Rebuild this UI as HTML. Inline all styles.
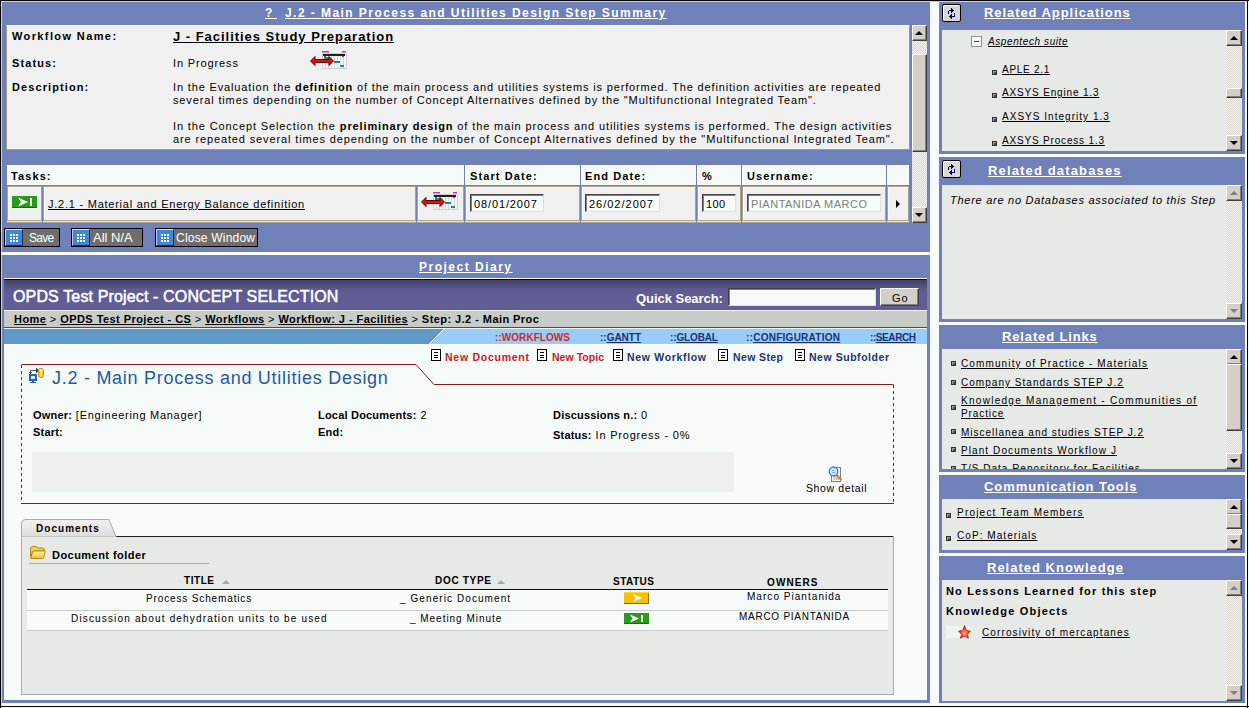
<!DOCTYPE html>
<html><head><meta charset="utf-8">
<style>
*{box-sizing:border-box;margin:0;padding:0}
html,body{width:1249px;height:708px;overflow:hidden;background:#f6faf8}
body{position:relative;font-family:"Liberation Sans",sans-serif;font-size:11px;color:#000}
.a{position:absolute}
.blue{background:#7080b9}
.t{position:absolute;white-space:nowrap;line-height:1}
.u{text-decoration:underline}
.b{font-weight:bold}
.w{color:#fff}
.sb{position:absolute;background:#ebe9e4 repeating-conic-gradient(#f4f3ef 0 25%,#d9d6cf 0 50%) 0 0/2px 2px}
.sbb{position:absolute;width:16px;height:16px;background:#d4d0c8;border:1px solid;border-color:#fff #404040 #404040 #fff;box-shadow:inset -1px -1px #808080}
.thumb{position:absolute;background:#d4d0c8;border:1px solid;border-color:#fff #404040 #404040 #fff;box-shadow:inset -1px -1px #808080}
.up:after,.dn:after{content:"";position:absolute;left:3px;border-left:4px solid transparent;border-right:4px solid transparent}
.up:after{top:5px;border-bottom:4px solid #000}
.dn:after{top:5px;border-top:4px solid #000}
.l15:after{left:2px}
.dis:after{border-bottom-color:#808080;border-top-color:#808080}
.cell{background:#f0f0f0;border:1px solid #a8a490;box-shadow:inset 1px 1px #fafaf8,0 1px #e8e8e0,0 2px #a8a490}
.inp{background:#f6faf8;border:1px solid;border-color:#404040 #e0e0d8 #e0e0d8 #404040;box-shadow:inset 1px 1px #808080;font-size:11px}
.inp span{position:absolute;left:3px;top:4px;line-height:1;letter-spacing:0.5px}
.btn{background:#6e6e6e;border:1px solid #000}
.btn i{position:absolute;left:0;top:0;width:18px;height:17px;background:#3d88d8;border:1px solid;border-color:#d8d0f8 #0a3a40 #0a3a40 #c8c0f0}
.btn i:after{content:"";position:absolute;left:4px;top:4px;width:9px;height:9px;background:radial-gradient(circle at 1px 1px,#fff 0.9px,transparent 1.1px) 0 0/3px 3px}
.doc{width:10px;height:12px;border:1px solid #000;background:#fff}
.doc:after{content:"";position:absolute;left:2px;top:2px;width:4px;height:6px;background:linear-gradient(#000 0 1px,transparent 1px 3px,#000 3px 4px,transparent 4px 5px,#000 5px 6px)}
.pc{background:#e6e9e6}
.bul{position:absolute;width:5px;height:5px;background:#505050;border:1px solid #303030;box-shadow:inset 1px 1px #a0a0a0}
.rf{position:absolute;width:19px;height:18px;background:#d8d8d0;border:1px solid #000;border-radius:2px;box-shadow:inset 1px 1px #fff}
.btn span{position:absolute;color:#fff;font-size:12px;line-height:1;white-space:nowrap}
</style></head><body>
<!-- outer frame lines -->
<div class="a" style="left:0;top:0;width:1249px;height:1px;background:#000"></div>
<div class="a" style="left:0;top:0;width:1px;height:708px;background:#000"></div>
<div class="a" style="left:1247px;top:0;width:1px;height:708px;background:#000"></div>
<div class="a" style="left:0;top:706px;width:1249px;height:1px;background:#000"></div>

<!-- ============ LEFT TOP PANEL ============ -->
<div class="a blue" style="left:2px;top:2px;width:928px;height:250px"></div>
<div class="a" style="left:1px;top:1px;width:1246px;height:1px;background:#c8d0e8"></div>
<div class="a" style="left:1px;top:1px;width:1px;height:705px;background:#c8d0e8"></div>
<div class="t w b u" style="left:265px;top:7px;font-size:12px;letter-spacing:1.47px;width:12px;overflow:hidden">?&nbsp;&nbsp;</div>
<div class="t w b u" id="ttl" style="left:285px;top:7px;font-size:12px;letter-spacing:1.44px">J.2 - Main Process and Utilities Design Step Summary</div>
<!-- summary grey box -->
<div class="a" style="left:6px;top:25px;width:904px;height:125px;background:#f0f0f0;border-left:1px solid #a09a80;border-right:1px solid #a09a80;border-top:1px solid #fafafa;border-bottom:1px solid #a09a80"></div>
<div class="t b" id="l1" style="left:12px;top:31px;letter-spacing:1.39px">Workflow Name:</div>
<div class="t b u" id="wfn" style="left:173px;top:30px;font-size:13px;letter-spacing:0.97px">J - Facilities Study Preparation</div>
<div class="t b" style="left:12px;top:58px;letter-spacing:1.1px">Status:</div>
<div class="t" id="inp" style="left:173px;top:58px;letter-spacing:0.87px">In Progress</div>
<div class="t b" style="left:12px;top:82px;letter-spacing:1.1px">Description:</div>
<div class="t" id="d1" style="left:173px;top:82px;letter-spacing:0.85px">In the Evaluation the <b>definition</b> of the main process and utilities systems is performed. The definition activities are repeated</div>
<div class="t" id="d2" style="left:173px;top:95px;letter-spacing:0.86px">several times depending on the number of Concept Alternatives defined by the "Multifunctional Integrated Team".</div>
<div class="t" id="d3" style="left:173px;top:121px;letter-spacing:0.88px">In the Concept Selection the <b>preliminary design</b> of the main process and utilities systems is performed. The design activities</div>
<div class="t" id="d4" style="left:173px;top:134px;letter-spacing:0.87px">are repeated several times depending on the number of Concept Alternatives defined by the "Multifunctional Integrated Team".</div>
<!-- gantt icon -->
<svg class="a" style="left:310px;top:50px" width="37" height="19" viewBox="0 0 37 19">
<rect x="12.5" y="3.5" width="24" height="15" fill="#f6f6f6" stroke="#d0d0d0" stroke-width="1"/>
<path d="M15.5 5v13M18.5 5v13M21.5 5v13M24.5 5v13M27.5 5v13M30.5 5v13M33.5 5v13" stroke="#d8d8d8" stroke-width="1"/>
<rect x="12" y="1" width="7" height="1.5" fill="#b040c0"/><rect x="32" y="1" width="4" height="1.5" fill="#b040c0"/>
<path d="M13 4h22v2h-1l-1 1.5-1-1.5H16l-1 1.5-1-1.5h-1z" fill="#202020"/>
<rect x="14" y="7" width="5" height="2" fill="#109090"/><rect x="24" y="11" width="6" height="2" fill="#109090"/><rect x="30" y="15" width="4" height="2" fill="#109090"/>
<path d="M0.5 11 L5 6.5 L5 9.5 L19 9.5 L19 6.5 L23.5 11 L19 15.5 L19 12.5 L5 12.5 L5 15.5 Z" fill="#ff0000" stroke="#400000" stroke-width="0.9"/>
</svg>
<!-- scrollbar -->
<div class="sb" style="left:912px;top:25px;width:15px;height:197px"></div>
<div class="sbb up l15" style="left:912px;top:25px;width:15px;height:16px"></div>
<div class="thumb" style="left:912px;top:54px;width:15px;height:98px"></div>
<div class="sbb dn l15" style="left:912px;top:207px;width:15px;height:16px"></div>
<!-- tasks table -->
<div class="a" style="left:7px;top:165px;width:902px;height:20px;background:#f6faf8"></div>
<div class="a" style="left:464px;top:165px;width:1px;height:20px;background:#7080b9"></div>
<div class="a" style="left:580px;top:165px;width:1px;height:20px;background:#7080b9"></div>
<div class="a" style="left:696px;top:165px;width:1px;height:20px;background:#7080b9"></div>
<div class="a" style="left:741px;top:165px;width:1px;height:20px;background:#7080b9"></div>
<div class="a" style="left:886px;top:165px;width:1px;height:20px;background:#7080b9"></div>
<div class="t b" style="left:11px;top:171px;letter-spacing:1.1px">Tasks:</div>
<div class="t b" style="left:470px;top:171px;letter-spacing:1.1px">Start Date:</div>
<div class="t b" style="left:585px;top:171px;letter-spacing:1.1px">End Date:</div>
<div class="t b" style="left:702px;top:171px;letter-spacing:1.1px">%</div>
<div class="t b" style="left:747px;top:171px;letter-spacing:1.1px">Username:</div>
<div class="a cell" style="left:7px;top:186px;width:35px;height:35px"></div>
<div class="a cell" style="left:43px;top:186px;width:373px;height:35px"></div>
<div class="a cell" style="left:417px;top:186px;width:47px;height:35px"></div>
<div class="a cell" style="left:465px;top:186px;width:115px;height:35px"></div>
<div class="a cell" style="left:581px;top:186px;width:115px;height:35px"></div>
<div class="a cell" style="left:697px;top:186px;width:44px;height:35px"></div>
<div class="a cell" style="left:742px;top:186px;width:144px;height:35px"></div>
<div class="a cell" style="left:887px;top:186px;width:22px;height:35px"></div>
<svg class="a" style="left:12px;top:196px" width="25" height="12" viewBox="0 0 25 12"><rect width="25" height="12" fill="#2a9a1a"/><rect x="0" y="11" width="25" height="1" fill="#1a6a10"/><path d="M6 1.5 L16 6 L6 10.5 L9 6 Z" fill="#fff"/><rect x="18" y="2" width="2" height="8" fill="#fff"/></svg>
<div class="t u" id="task" style="left:48px;top:199px;letter-spacing:0.76px">J.2.1 - Material and Energy Balance definition</div>
<svg class="a" style="left:421px;top:191px" width="37" height="19" viewBox="0 0 37 19">
<rect x="12.5" y="3.5" width="24" height="15" fill="#f6f6f6" stroke="#d0d0d0" stroke-width="1"/>
<path d="M15.5 5v13M18.5 5v13M21.5 5v13M24.5 5v13M27.5 5v13M30.5 5v13M33.5 5v13" stroke="#d8d8d8" stroke-width="1"/>
<rect x="12" y="1" width="7" height="1.5" fill="#b040c0"/><rect x="32" y="1" width="4" height="1.5" fill="#b040c0"/>
<path d="M13 4h22v2h-1l-1 1.5-1-1.5H16l-1 1.5-1-1.5h-1z" fill="#202020"/>
<rect x="14" y="7" width="5" height="2" fill="#109090"/><rect x="24" y="11" width="6" height="2" fill="#109090"/><rect x="30" y="15" width="4" height="2" fill="#109090"/>
<path d="M0.5 11 L5 6.5 L5 9.5 L19 9.5 L19 6.5 L23.5 11 L19 15.5 L19 12.5 L5 12.5 L5 15.5 Z" fill="#ff0000" stroke="#400000" stroke-width="0.9"/>
</svg>
<div class="a inp" style="left:470px;top:194px;width:74px;height:18px"><span id="i1" style="letter-spacing:0.88px">08/01/2007</span></div>
<div class="a inp" style="left:585px;top:194px;width:75px;height:18px"><span id="i2" style="letter-spacing:0.99px">26/02/2007</span></div>
<div class="a inp" style="left:702px;top:194px;width:34px;height:18px"><span id="i3" style="letter-spacing:0.32px">100</span></div>
<div class="a inp" style="left:747px;top:194px;width:134px;height:18px;color:#808080;white-space:nowrap"><span id="i4" style="letter-spacing:0.49px">PIANTANIDA MARCO</span></div>
<div class="a" style="left:896px;top:200px;border-left:4px solid #000;border-top:4px solid transparent;border-bottom:4px solid transparent"></div>
<!-- buttons -->
<div class="a btn" style="left:4px;top:228px;width:56px;height:19px"><i></i><span id="bsave" style="left:24px;top:3px;letter-spacing:-0.72px">Save</span></div>
<div class="a btn" style="left:71px;top:228px;width:72px;height:19px"><i></i><span id="ball" style="left:21px;top:2px;font-size:13px;font-weight:normal;letter-spacing:-0.02px">All N/A</span></div>
<div class="a btn" style="left:155px;top:228px;width:103px;height:19px"><i></i><span id="bclose" style="left:20px;top:3px;letter-spacing:0.21px">Close Window</span></div>
<div class="a" style="left:2px;top:252px;width:928px;height:3px;background:#fcfdfc"></div>

<!-- ============ LEFT BOTTOM PANEL ============ -->
<div class="a blue" style="left:2px;top:255px;width:928px;height:448px"></div>
<div class="t w b u" id="pd" style="left:419px;top:261px;font-size:12px;letter-spacing:1.5px">Project Diary</div>
<!-- inner frame -->
<div class="a" style="left:4px;top:278px;width:923px;height:422px;background:#f6faf8"></div>
<div class="a" style="left:4px;top:278px;width:923px;height:1px;background:#f4f6fa"></div>
<div class="a" style="left:4px;top:279px;width:923px;height:1px;background:#000"></div>
<div class="a" style="left:4px;top:280px;width:923px;height:30px;background:linear-gradient(#434266,#4c4a74 12%,#5c5990 30%,#605c96 45%,#615d97)"></div>
<div class="t w" id="opds" style="left:13px;top:289px;font-size:16px;-webkit-text-stroke:0.5px #fff;letter-spacing:0.14px">OPDS Test Project - CONCEPT SELECTION</div>
<div class="t w b" id="qs" style="left:636px;top:292px;font-size:13px;letter-spacing:-0.04px">Quick Search:</div>
<div class="a" style="left:728px;top:288px;width:148px;height:18px;background:#f6faf8;border:1px solid;border-color:#404040 #e0e0d8 #e0e0d8 #404040;box-shadow:inset 1px 1px #808080"></div>
<div class="a" style="left:880px;top:288px;width:39px;height:18px;background:#d4d0c8;border:1px solid;border-color:#fff #404040 #404040 #fff;box-shadow:inset -1px -1px #808080"></div>
<div class="t" id="go" style="left:892px;top:293px;font-size:11px;letter-spacing:1px">Go</div>
<!-- breadcrumb -->
<div class="a" style="left:4px;top:310px;width:923px;height:19px;background:#c8ccc8;border-top:1px solid #f0f4f0;border-bottom:1px solid #f0f4f0;box-shadow:inset 0 -1px #3a5068"></div>
<div class="t b" id="bc" style="left:14px;top:314px;letter-spacing:0.44px"><span class="u">Home</span> <span style="font-weight:normal">&gt;</span> <span class="u">OPDS Test Project - CS</span> <span style="font-weight:normal">&gt;</span> <span class="u">Workflows</span> <span style="font-weight:normal">&gt;</span> <span class="u">Workflow: J - Facilities</span> <span style="font-weight:normal">&gt;</span> Step: J.2 - Main Proc</div>
<!-- blue tab bar -->
<div class="a" style="left:4px;top:329px;width:923px;height:15px;background:#99ccf8"></div>
<svg class="a" style="left:4px;top:329px" width="445" height="15"><path d="M0 0H440L425 15H0Z" fill="#6098c8"/><path d="M440 0L425 15" stroke="#fff" stroke-width="1"/></svg>
<div class="t b" id="m1" style="left:495px;top:333px;font-size:10px;color:#d02828;letter-spacing:0.06px">::WORKFLOWS</div>
<div class="t b" id="m2" style="left:600px;top:333px;font-size:10px;color:#1a3470;letter-spacing:-0.02px">::<span class="u">GANTT</span></div>
<div class="t b" id="m3" style="left:670px;top:333px;font-size:10px;color:#1a3470;letter-spacing:-0.13px">::<span class="u">GLOBAL</span></div>
<div class="t b" id="m4" style="left:746px;top:333px;font-size:10px;color:#1a3470;letter-spacing:0.26px">::<span class="u">CONFIGURATION</span></div>
<div class="t b" id="m5" style="left:870px;top:333px;font-size:10px;color:#1a3470;letter-spacing:-0.42px">::<span class="u">SEARCH</span></div>
<!-- action links -->
<div class="a doc" style="left:431px;top:349px"></div>
<div class="t b" id="n1" style="left:445px;top:352px;font-size:10.5px;color:#c82020;letter-spacing:0.74px">New Document</div>
<div class="a doc" style="left:537px;top:349px"></div>
<div class="t b" id="n2" style="left:552px;top:352px;font-size:10.5px;color:#c82020;letter-spacing:0.03px">New Topic</div>
<div class="a doc" style="left:613px;top:349px"></div>
<div class="t b" id="n3" style="left:627px;top:352px;font-size:10.5px;color:#1a3470;letter-spacing:0.68px">New Workflow</div>
<div class="a doc" style="left:718px;top:349px"></div>
<div class="t b" id="n4" style="left:733px;top:352px;font-size:10.5px;color:#1a3470;letter-spacing:0.39px">New Step</div>
<div class="a doc" style="left:795px;top:349px"></div>
<div class="t b" id="n5" style="left:809px;top:352px;font-size:10.5px;color:#1a3470;letter-spacing:0.54px">New Subfolder</div>
<!-- red box -->
<svg class="a" style="left:20px;top:363px" width="876" height="142">
<path d="M1.5 1.5H396L414 21.5H873.5" fill="none" stroke="#8b1a1a" stroke-width="1"/>
<path d="M1.5 2V140.5" fill="none" stroke="#8b1a1a" stroke-width="1" stroke-dasharray="3 3"/>
<path d="M873.5 22V140.5" fill="none" stroke="#8b1a1a" stroke-width="1" stroke-dasharray="3 3"/>
<path d="M1 140.5H874" fill="none" stroke="#8b1a1a" stroke-width="1"/>
</svg>
<svg class="a" style="left:29px;top:368px" width="17" height="16" viewBox="0 0 17 16" shape-rendering="crispEdges">
<defs><linearGradient id="cy" x1="0" y1="0" x2="1" y2="0"><stop offset="0" stop-color="#e8a010"/><stop offset="0.5" stop-color="#fff070"/><stop offset="1" stop-color="#e8a010"/></linearGradient></defs>
<rect x="0" y="6" width="8" height="7" fill="#2a62b0"/><rect x="2" y="8" width="4" height="3" fill="#d8e8f8"/><rect x="3" y="13" width="2" height="1" fill="#2a62b0"/><rect x="1" y="14" width="6" height="1" fill="#2a62b0"/>
<path d="M1 2h6v1H2v3H1z" fill="#506080"/><path d="M7 0h1v1h1v1h1v1H9v1H8v1H7z" fill="#404860"/><path d="M0 4h3v1H2v1H1V5H0z" fill="#404860"/>
<g shape-rendering="geometricPrecision"><rect x="9.5" y="0.5" width="5" height="9" rx="2.5" ry="1.8" fill="url(#cy)" stroke="#d89000" stroke-width="1"/><ellipse cx="12" cy="2.3" rx="2" ry="1" fill="#fff8a0"/></g>
</svg>
<div class="t" id="j2" style="left:52px;top:369px;font-size:18px;color:#1f5a9e;letter-spacing:0.73px">J.2 - Main Process and Utilities Design</div>
<div class="t" id="ow" style="left:33px;top:410px;letter-spacing:0.72px"><b style="letter-spacing:0.2px">Owner:</b> [Engineering Manager]</div>
<div class="t b" id="st" style="left:33px;top:427px;letter-spacing:0.2px">Start:</div>
<div class="t" id="ld" style="left:318px;top:410px;letter-spacing:0.85px"><b style="letter-spacing:0.2px">Local Documents:</b> 2</div>
<div class="t b" id="en" style="left:318px;top:427px;letter-spacing:0.2px">End:</div>
<div class="t" id="dn" style="left:553px;top:410px;letter-spacing:0.71px"><b style="letter-spacing:0.2px">Discussions n.:</b> 0</div>
<div class="t" id="sts" style="left:553px;top:430px;letter-spacing:0.8px"><b style="letter-spacing:0.2px">Status:</b> In Progress - 0%</div>
<div class="a" style="left:32px;top:452px;width:702px;height:40px;background:#efefef"></div>
<svg class="a" style="left:827px;top:466px" width="17" height="16" viewBox="0 0 17 16">
<rect x="4.5" y="1.5" width="9" height="14" fill="#fafafa" stroke="#808080"/><path d="M6 11h6M6 13h6" stroke="#a0a0a0"/>
<circle cx="6.5" cy="5.5" r="4.3" fill="#d0e8fa" stroke="#2a78c8" stroke-width="1.3"/><path d="M4.5 4.5h3M5 6.5h3" stroke="#60a0d8" stroke-width="0.8"/>
<path d="M9.5 9l5 5" stroke="#e07818" stroke-width="2"/>
</svg>
<div class="t" id="sd" style="left:806px;top:483px;font-size:10.5px;letter-spacing:0.62px">Show detail</div>
<!-- documents tab -->
<div class="a" style="left:21px;top:536px;width:873px;height:159px;background:#e6e9e6;border:1px solid #a8aca8;border-top:none"></div>
<div class="a" style="left:115px;top:536px;width:778px;height:1px;background:#202020"></div>
<svg class="a" style="left:21px;top:519px" width="96" height="18"><defs><linearGradient id="tg" x1="0" y1="0" x2="0" y2="1"><stop offset="0" stop-color="#f0f0f0"/><stop offset="1" stop-color="#dcdedc"/></linearGradient></defs><path d="M0.5 18V5Q0.5 0.5 5 0.5H88L95 17.5" fill="url(#tg)" stroke="#a8aca8"/><path d="M1 17.5H95" stroke="#c8ccc8"/></svg>
<div class="t b" id="tabd" style="left:36px;top:524px;font-size:10px;letter-spacing:1.04px">Documents</div>
<svg class="a" style="left:30px;top:546px" width="16" height="13" viewBox="0 0 16 13"><defs><linearGradient id="fg" x1="0" y1="0" x2="0" y2="1"><stop offset="0" stop-color="#fff4a0"/><stop offset="1" stop-color="#e8c030"/></linearGradient></defs><path d="M0.5 11V3Q0.5 0.5 3 0.5H6L8 2H12Q14.5 2 14.5 4V5H3Z" fill="#f0d050" stroke="#b08a10"/><path d="M1 12.5Q0.5 12.5 0.8 11.5L2.5 6Q3 5 4 5H14.5Q15.5 5 15.2 6L13.8 11.5Q13.5 12.5 12.5 12.5Z" fill="url(#fg)" stroke="#b08a10"/></svg>
<div class="t b" id="dfold" style="left:52px;top:550px;letter-spacing:0.46px">Document folder</div>
<div class="a" style="left:29px;top:563px;width:180px;height:1px;background:#a8aca8"></div>
<div class="t b" id="h1" style="left:184px;top:576px;font-size:10px;letter-spacing:0.55px">TITLE</div>
<div class="a" style="left:222px;top:580px;border-bottom:4px solid #a8a8a8;border-left:4px solid transparent;border-right:4px solid transparent"></div>
<div class="t b" id="h2" style="left:435px;top:576px;font-size:10px;letter-spacing:0.7px">DOC TYPE</div>
<div class="a" style="left:497px;top:580px;border-bottom:4px solid #a8a8a8;border-left:4px solid transparent;border-right:4px solid transparent"></div>
<div class="t b" id="h3" style="left:613px;top:577px;font-size:10px;letter-spacing:0.5px">STATUS</div>
<div class="t b" id="h4" style="left:767px;top:578px;font-size:10px;letter-spacing:1.1px">OWNERS</div>
<div class="a" style="left:27px;top:589px;width:861px;height:1px;background:#101010"></div>
<div class="a" style="left:27px;top:590px;width:861px;height:21px;background:#f6faf8;border-bottom:1px solid #c8ccc8"></div>
<div class="a" style="left:27px;top:611px;width:861px;height:20px;background:#f6faf8;border-bottom:1px solid #c8ccc8"></div>
<div class="t" id="r1" style="left:146px;top:594px;font-size:10px;letter-spacing:0.86px">Process Schematics</div>
<div class="t" id="r2" style="left:71px;top:614px;font-size:10px;letter-spacing:1.16px">Discussion about dehydration units to be used</div>
<div class="t" id="r3" style="left:400px;top:594px;font-size:10px;letter-spacing:1.08px">_ Generic Document</div>
<div class="t" id="r4" style="left:410px;top:614px;font-size:10px;letter-spacing:0.97px">_ Meeting Minute</div>
<svg class="a" style="left:624px;top:592px" width="25" height="12" viewBox="0 0 25 12"><rect width="25" height="12" fill="#f4c200"/><rect y="0" width="25" height="1" fill="#ffd830"/><rect x="24" y="1" width="1" height="11" fill="#a87000"/><rect y="11" width="25" height="1" fill="#8a6000"/><path d="M9 2L18 6L9 10L11.5 6Z" fill="#fff"/></svg>
<svg class="a" style="left:624px;top:613px" width="25" height="11" viewBox="0 0 25 11"><rect width="25" height="11" fill="#2a9a1a"/><rect y="10" width="25" height="1" fill="#1a6a10"/><path d="M6 1.5L15 5.5L6 9.5L8.5 5.5Z" fill="#fff"/><rect x="17" y="2" width="2" height="7" fill="#fff"/></svg>
<div class="t" id="r5" style="left:747px;top:592px;font-size:10px;letter-spacing:1.04px">Marco Piantanida</div>
<div class="t" id="r6" style="left:739px;top:612px;font-size:10px;letter-spacing:0.73px">MARCO PIANTANIDA</div>

<!-- ============ RIGHT PANELS ============ -->
<div class="a blue" style="left:939px;top:2px;width:306px;height:152px"></div>
<div class="a blue" style="left:939px;top:157px;width:306px;height:165px"></div>
<div class="a blue" style="left:939px;top:325px;width:306px;height:147px"></div>
<div class="a blue" style="left:939px;top:475px;width:306px;height:78px"></div>
<div class="a blue" style="left:939px;top:556px;width:306px;height:147px"></div>
<!-- Apps -->
<div class="a rf" style="left:942px;top:4px"><svg style="position:absolute;left:-1px;top:-1px" width="19" height="18" shape-rendering="crispEdges"><path fill="#000070" d="M7 6h5v1H7zM9 4h1v5H9zM10 5h1v3h-1zM6 7h1v3H6zM12 9h1v3h-1zM8 12h5v1H8zM9 10h1v5H9zM8 11h1v3H8zM7 12h1v1H7z"/></svg></div>
<div class="t w b u" id="ra" style="left:984px;top:6px;font-size:13px;letter-spacing:0.93px">Related Applications</div>
<div class="a pc" style="left:942px;top:30px;width:284px;height:121px"></div>
<div class="a" style="left:971px;top:36px;width:11px;height:11px;border:1px solid #909090;background:#f8f8f8"><div class="a" style="left:2px;top:4px;width:5px;height:1px;background:#404040"></div></div>
<div class="t i u" id="asp" style="left:988px;top:37px;font-size:10px;font-style:italic;letter-spacing:0.6px">Aspentech suite</div>
<div class="a bul" style="left:992px;top:70px"></div>
<div class="t u" id="ap1" style="left:1002px;top:65px;font-size:10px;letter-spacing:0.72px">APLE 2.1</div>
<div class="a bul" style="left:992px;top:93px"></div>
<div class="t u" id="ap2" style="left:1002px;top:88px;font-size:10px;letter-spacing:0.84px">AXSYS Engine 1.3</div>
<div class="a bul" style="left:992px;top:117px"></div>
<div class="t u" id="ap3" style="left:1002px;top:112px;font-size:10px;letter-spacing:1.03px">AXSYS Integrity 1.3</div>
<div class="a bul" style="left:992px;top:141px"></div>
<div class="t u" id="ap4" style="left:1002px;top:136px;font-size:10px;letter-spacing:0.82px">AXSYS Process 1.3</div>
<div class="sb" style="left:1226px;top:30px;width:16px;height:121px"></div>
<div class="sbb up" style="left:1226px;top:30px;height:16px"></div>
<div class="thumb" style="left:1226px;top:88px;width:16px;height:10px"></div>
<div class="sbb dn" style="left:1226px;top:135px;height:16px"></div>
<!-- Databases -->
<div class="a rf" style="left:942px;top:160px"><svg style="position:absolute;left:-1px;top:-1px" width="19" height="18" shape-rendering="crispEdges"><path fill="#000070" d="M7 6h5v1H7zM9 4h1v5H9zM10 5h1v3h-1zM6 7h1v3H6zM12 9h1v3h-1zM8 12h5v1H8zM9 10h1v5H9zM8 11h1v3H8zM7 12h1v1H7z"/></svg></div>
<div class="t w b u" id="rdb" style="left:988px;top:164px;font-size:13px;letter-spacing:1.15px">Related databases</div>
<div class="a pc" style="left:942px;top:185px;width:284px;height:134px"></div>
<div class="t" id="nodb" style="left:950px;top:195px;font-size:11px;font-style:italic;letter-spacing:0.73px">There are no Databases associated to this Step</div>
<div class="sb" style="left:1226px;top:185px;width:16px;height:134px"></div>
<div class="sbb up dis" style="left:1226px;top:185px;height:16px"></div>
<div class="sbb dn dis" style="left:1226px;top:303px;height:16px"></div>
<!-- Links -->
<div class="t w b u" id="rl" style="left:1002px;top:330px;font-size:13px;letter-spacing:0.86px">Related Links</div>
<div class="a pc" style="left:942px;top:349px;width:284px;height:120px;overflow:hidden">
<div class="a bul" style="left:9px;top:12px"></div>
<div class="t u" id="l_1" style="left:19px;top:10px;font-size:10px;letter-spacing:1.12px">Community of Practice - Materials</div>
<div class="a bul" style="left:9px;top:31px"></div>
<div class="t u" id="l_2" style="left:19px;top:29px;font-size:10px;letter-spacing:1.03px">Company Standards STEP J.2</div>
<div class="a bul" style="left:9px;top:56px"></div>
<div class="t u" id="l_3" style="left:19px;top:47px;font-size:10px;letter-spacing:1.28px">Knowledge Management - Communities of</div>
<div class="t u" id="l_3b" style="left:19px;top:60px;font-size:10px;letter-spacing:0.9px">Practice</div>
<div class="a bul" style="left:9px;top:80px"></div>
<div class="t u" id="l_4" style="left:19px;top:79px;font-size:10px;letter-spacing:0.98px">Miscellanea and studies STEP J.2</div>
<div class="a bul" style="left:9px;top:98px"></div>
<div class="t u" id="l_5" style="left:19px;top:97px;font-size:10px;letter-spacing:1.09px">Plant Documents Workflow J</div>
<div class="a bul" style="left:9px;top:117px"></div>
<div class="t u" id="l_6" style="left:19px;top:115px;font-size:10px;letter-spacing:0.99px">T/S Data Repository for Facilities</div>
</div>
<div class="sb" style="left:1226px;top:349px;width:16px;height:120px"></div>
<div class="sbb up" style="left:1226px;top:349px;height:16px"></div>
<div class="thumb" style="left:1226px;top:364px;width:16px;height:67px"></div>
<div class="sbb dn" style="left:1226px;top:453px;height:16px"></div>
<!-- Comm -->
<div class="t w b u" id="ct" style="left:984px;top:480px;font-size:13px;letter-spacing:0.94px">Communication Tools</div>
<div class="a pc" style="left:942px;top:499px;width:284px;height:51px"></div>
<div class="a bul" style="left:946px;top:513px"></div>
<div class="t u" id="c1" style="left:957px;top:508px;font-size:10px;letter-spacing:1.21px">Project Team Members</div>
<div class="a bul" style="left:946px;top:536px"></div>
<div class="t u" id="c2" style="left:957px;top:531px;font-size:10px;letter-spacing:1.06px">CoP: Materials</div>
<div class="sb" style="left:1226px;top:499px;width:16px;height:51px"></div>
<div class="sbb up" style="left:1226px;top:499px;height:16px"></div>
<div class="thumb" style="left:1226px;top:514px;width:16px;height:15px"></div>
<div class="sbb dn" style="left:1226px;top:534px;height:16px"></div>
<!-- Knowledge -->
<div class="t w b u" id="rk" style="left:987px;top:561px;font-size:13px;letter-spacing:1.0px">Related Knowledge</div>
<div class="a pc" style="left:942px;top:580px;width:284px;height:121px"></div>
<div class="t b" id="k1" style="left:946px;top:586px;letter-spacing:1.16px">No Lessons Learned for this step</div>
<div class="t b" id="k2" style="left:946px;top:606px;letter-spacing:1.2px">Knowledge Objects</div>
<div class="a" style="left:946px;top:626px;width:24px;height:12px;background:#f0f4f0"></div>
<svg class="a" style="left:958px;top:625px" width="13" height="14" viewBox="0 0 13 14"><defs><radialGradient id="sg" cx="0.5" cy="0.6" r="0.6"><stop offset="0" stop-color="#ffb080"/><stop offset="0.6" stop-color="#e83820"/><stop offset="1" stop-color="#b00808"/></radialGradient></defs><path d="M6.5 0.5L8.3 5.2L12.5 6.2L9.6 9.2L10.6 13.2L6.5 11.4L2.4 13.2L3.4 9.2L0.5 6.2L4.7 5.2Z" fill="url(#sg)" stroke="#b01010" stroke-width="0.6"/></svg>
<div class="t u" id="k3" style="left:982px;top:628px;font-size:10px;letter-spacing:1.11px">Corrosivity of mercaptanes</div>
<div class="sb" style="left:1226px;top:580px;width:16px;height:121px"></div>
<div class="sbb up dis" style="left:1226px;top:580px;height:16px"></div>
<div class="sbb dn dis" style="left:1226px;top:685px;height:16px"></div>

</body></html>
